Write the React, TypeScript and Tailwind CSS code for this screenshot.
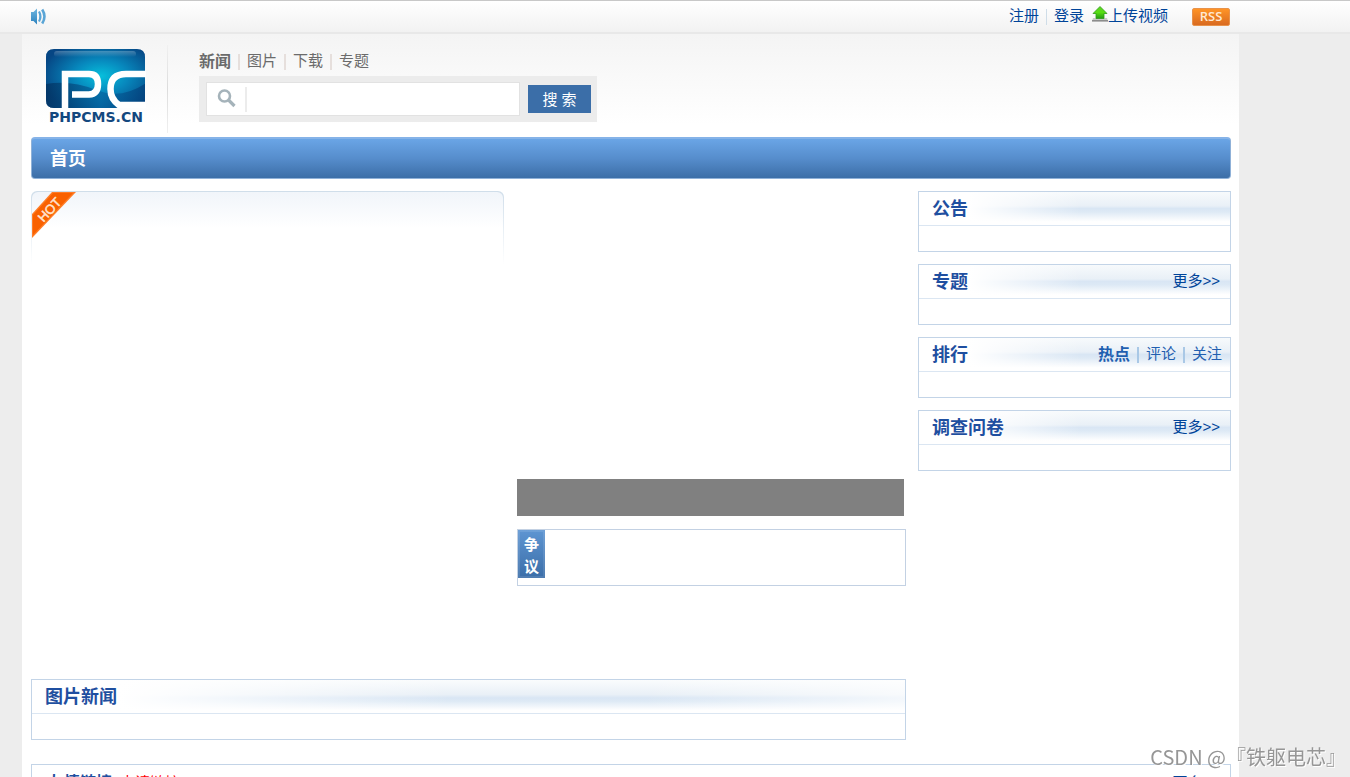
import type { ReactNode } from "react";

const HEAD_GLOW =
  "bg-[linear-gradient(to_right,#fff_16%,transparent_52%),linear-gradient(to_bottom,#f7fafc_0%,#e9f0f7_42%,#d9e6f4_50%,#dde9f5_60%,#fff_90%)]";
const WIDE_GLOW =
  "bg-[linear-gradient(to_right,#fff_10%,transparent_48%,transparent_70%,#ffffffb3_100%),linear-gradient(to_bottom,#fafcfd_0%,#e9f0f7_44%,#d9e6f4_54%,#dde9f5_64%,#fff_92%)]";

const SpeakerIcon = () => (
  <svg width="15" height="18" viewBox="0 0 15 18" fill="none">
    <defs>
      <linearGradient id="speaker" x1="0" y1="0" x2="0" y2="1">
        <stop offset="0" stopColor="#6fb6df" />
        <stop offset="1" stopColor="#2c82be" />
      </linearGradient>
    </defs>
    <path d="M0 4h2.500L6 0.500v16L2.500 13H0z" fill="url(#speaker)" />
    <path d="M8 3.500q2.800 5 0 10" stroke="#5aa5d6" strokeWidth="2.200" />
    <path d="M11.200 1.500q4.500 7 0 14" stroke="#5aa5d6" strokeWidth="2.600" />
  </svg>
);

const UploadIcon = () => (
  <svg width="16" height="17" viewBox="0 0 16 17">
    <defs>
      <linearGradient id="upload" x1="0" y1="0" x2="0" y2="1">
        <stop offset="0" stopColor="#5fd328" />
        <stop offset="0.500" stopColor="#56dd10" />
        <stop offset="1" stopColor="#239a12" />
      </linearGradient>
    </defs>
    <path d="M1 12h14l1 3.500H0z" fill="#c9c9c9" />
    <path d="M0 14h16v1.500H0z" fill="#8d8d8d" />
    <path
      d="M8 .5 15 7.500H12V12.500H4V7.500H1z"
      fill="url(#upload)"
      stroke="#2e9c17"
      strokeWidth="0.800"
    />
  </svg>
);

const SearchIcon = () => (
  <svg width="20" height="20" viewBox="0 0 20 20" fill="none" stroke="#a5b3ba">
    <circle cx="7.500" cy="7" r="5.500" strokeWidth="2.600" />
    <path d="M11.500 11 17.500 17" strokeWidth="3.200" />
  </svg>
);

const Logo = () => (
  <svg width="100" height="76" viewBox="0 0 100 76" role="img" aria-label="PHPCMS">
    <defs>
      <radialGradient id="sky" cx="0.550" cy="0.450" r="0.600">
        <stop offset="0" stopColor="#06bfdc" />
        <stop offset="0.450" stopColor="#0788bd" />
        <stop offset="1" stopColor="#064684" />
      </radialGradient>
      <linearGradient id="shine" x1="0" y1="0" x2="0" y2="1">
        <stop offset="0" stopColor="#fff" stopOpacity="0.250" />
        <stop offset="1" stopColor="#fff" stopOpacity="0" />
      </linearGradient>
      <linearGradient id="wave" x1="0" y1="0" x2="1" y2="0">
        <stop offset="0" stopColor="#02315f" />
        <stop offset="0.550" stopColor="#0569a4" />
        <stop offset="1" stopColor="#033f7a" />
      </linearGradient>
      <clipPath id="plate">
        <path d="M8 0H91Q99 0 99 8V53H72V59H8Q0 59 0 51V8Q0 0 8 0z" />
      </clipPath>
    </defs>
    <g clipPath="url(#plate)">
      <rect width="100" height="60" fill="url(#sky)" />
      <path d="M0 35Q25 31 50 41T100 34V60H0z" fill="url(#wave)" opacity="0.750" />
      <rect x="8" y="2" width="82" height="6" rx="3" fill="url(#shine)" />
    </g>
    <g fill="none" stroke="#fff" strokeWidth="6.500">
      <path d="M19 59V25H43Q52 25 52 35T43 45.500H26" />
      <path d="M100 25H80Q64.500 25 64.500 40 64.500 50 73 56H100" />
    </g>
    <text
      x="50"
      y="73"
      textAnchor="middle"
      fill="#13487f"
      fontFamily="DejaVu Sans, sans-serif"
      fontWeight="700"
      fontSize="14"
    >
      PHPCMS.CN
    </text>
  </svg>
);

const HotRibbon = () => (
  <svg width="45" height="47" viewBox="0 0 45 47" className="block">
    <path d="M20 0H44L0 46V22z" fill="#ff7c26" />
    <path d="M21 1H41L1 43V23z" fill="#f96100" />
    <text
      transform="translate(18 18) rotate(-47)"
      textAnchor="middle"
      y="4"
      fill="#ffe3cf"
      fontFamily="Liberation Sans, sans-serif"
      fontSize="13"
      stroke="#ffe3cf"
      strokeWidth="0.500"
    >
      HOT
    </text>
  </svg>
);

const Divider = ({ className }: { className: string }) => (
  <span className={`h-4 w-0.5 ${className}`} />
);

const MoreLink = () => (
  <a href="#" className="mr-2.5 text-[15px] text-[#004499]">
    更多&gt;&gt;
  </a>
);

const Panel = ({
  title,
  glow = HEAD_GLOW,
  children,
}: {
  title: string;
  glow?: string;
  children?: ReactNode;
}) => (
  <section className="border border-[#c3d4e7] bg-white">
    <div
      className={`flex h-[34px] items-center justify-between border-b border-[#dbe6f2] ${glow}`}
    >
      <h2 className="pl-[13px] text-lg font-bold text-[#1f4fa0]">{title}</h2>
      {children}
    </div>
    <div className="h-[25px]" />
  </section>
);

const TopBar = () => (
  <div className="h-[34px] border-t border-b-2 border-t-[#c8c8c8] border-b-[#e8e8e8] bg-linear-to-b from-white to-[#f2f2f2]">
    <div className="ml-[31px] mr-[120px] flex h-full items-center justify-between">
      <SpeakerIcon />
      <div className="flex items-center text-[15px] text-[#004499]">
        <a href="#">注册</a>
        <span className="mx-[7px] h-4 w-px bg-[#cfdde8]" />
        <a href="#">登录</a>
        <a href="#" className="ml-2 flex items-center">
          <span className="mb-1">
            <UploadIcon />
          </span>
          上传视频
        </a>
        <a
          href="#"
          className="ml-6 flex h-[18px] w-[38px] items-center justify-center rounded-xs border border-[#e8924a] bg-linear-to-b from-[#ff9426] to-[#d96a20] font-['Open_Sans',sans-serif] text-[13px] font-semibold text-[#ffe9d2]"
        >
          RSS
        </a>
      </div>
    </div>
  </div>
);

const Header = () => (
  <header className="flex h-[103px] pt-[11px]">
    <a href="#" className="ml-[15px] mt-1 block h-[76px]">
      <Logo />
    </a>
    <div className="ml-[21px] h-[88px] w-px bg-linear-to-b from-[#f0f0f0] via-[#dcdcdc] to-[#f0f0f0]" />
    <div className="ml-[31px] mt-1.5">
      <nav className="flex h-[21px] items-center gap-[7px] text-[15px] text-[#6b6b6b]">
        <a href="#" className="text-base font-bold">
          新闻
        </a>
        <Divider className="bg-[#e6dfdc]" />
        <a href="#">图片</a>
        <Divider className="bg-[#e6dfdc]" />
        <a href="#">下载</a>
        <Divider className="bg-[#e6dfdc]" />
        <a href="#">专题</a>
      </nav>
      <form className="mt-1 flex h-[46px] w-[398px] items-center bg-[#ececec] px-1.5">
        <label className="ml-px flex h-[34px] flex-1 items-center border border-[#e2e2e2] bg-white pl-2.5">
          <SearchIcon />
          <input
            type="text"
            aria-label="搜索"
            className="ml-2 h-[25px] min-w-0 flex-1 border-l-2 border-[#ececec] px-2 text-sm outline-none"
          />
        </label>
        <button
          type="button"
          className="ml-2 h-7 w-[63px] bg-[#3b6ea8] pt-0.5 text-[15px] text-white"
        >
          搜 索
        </button>
      </form>
    </div>
  </header>
);

const App = () => {
  return (
    <div className="min-h-screen bg-[#ededed] font-['Liberation_Sans','Noto_Sans_CJK_SC',sans-serif]">
      <TopBar />
      <div className="ml-[22px] mr-[111px] bg-white bg-linear-to-b from-[#f4f4f4] to-white to-[90px] px-[9px] pr-2 pb-6">
        <Header />

        <nav className="flex h-[42px] items-center rounded-sm border border-t-2 border-[#8fb1d8] border-t-[#86b3e8] bg-linear-to-b from-[#6aa5e6] via-[#568dcc] to-[#3c6ea7] px-[18px]">
          <a href="#" className="text-lg font-bold text-white">
            首页
          </a>
        </nav>

        <main className="mt-3 flex gap-3">
          <div className="min-w-0 flex-1">
            <div className="flex min-h-[488px] gap-[13px]">
              <section className="flex-1">
                <div className="h-[74px] rounded-t-md bg-linear-to-b from-[#d0deea] to-white p-px pb-0">
                  <div className="h-full rounded-t-md bg-linear-to-b from-[#f1f5fa] to-white to-50%">
                    <HotRibbon />
                  </div>
                </div>
              </section>
              <section className="flex w-[389px] flex-col">
                <div className="h-72" />
                <div className="mr-0.5 h-[37px] bg-[#808080]" />
                <div className="mt-[13px] h-[57px] border border-[#c3d1e3]">
                  <h2 className="flex h-12 w-[27px] flex-col items-center justify-end bg-linear-to-b from-[#5e95d2] to-[#3b6ea8] text-[15px] leading-[22px] font-bold text-white inset-ring-2 inset-ring-white/10">
                    <span>争</span>
                    <span>议</span>
                  </h2>
                </div>
              </section>
            </div>
            <Panel title="图片新闻" glow={WIDE_GLOW} />
          </div>

          <aside className="flex w-[313px] flex-col gap-3">
            <Panel title="公告" />
            <Panel title="专题">
              <MoreLink />
            </Panel>
            <Panel title="排行">
              <div className="mr-2 flex items-center gap-[7px] text-[15px] text-[#1f5fb0]">
                <a href="#" className="text-base font-bold">
                  热点
                </a>
                <Divider className="bg-[#a9c8e6]" />
                <a href="#">评论</a>
                <Divider className="bg-[#a9c8e6]" />
                <a href="#">关注</a>
              </div>
            </Panel>
            <Panel title="调查问卷">
              <MoreLink />
            </Panel>
          </aside>
        </main>

        <section className="mt-6 border border-[#c3d4e7] pb-7">
          <div className="flex items-center justify-between pt-1.5 pl-4">
            <div className="flex items-center gap-2 text-[15px]">
              <h2 className="text-base font-bold text-[#1f4fa0]">友情链接</h2>
              <a href="#" className="text-[#ff0000]">
                申请链接
              </a>
            </div>
            <MoreLink />
          </div>
        </section>
      </div>

      <p className="fixed right-1 bottom-1.5 font-['Noto_Sans_CJK_SC',sans-serif] text-xl leading-7 font-normal text-[#969696] [text-shadow:1px_1px_0_#fff]">
        CSDN @『铁躯电芯』
      </p>
    </div>
  );
};

export default App;
